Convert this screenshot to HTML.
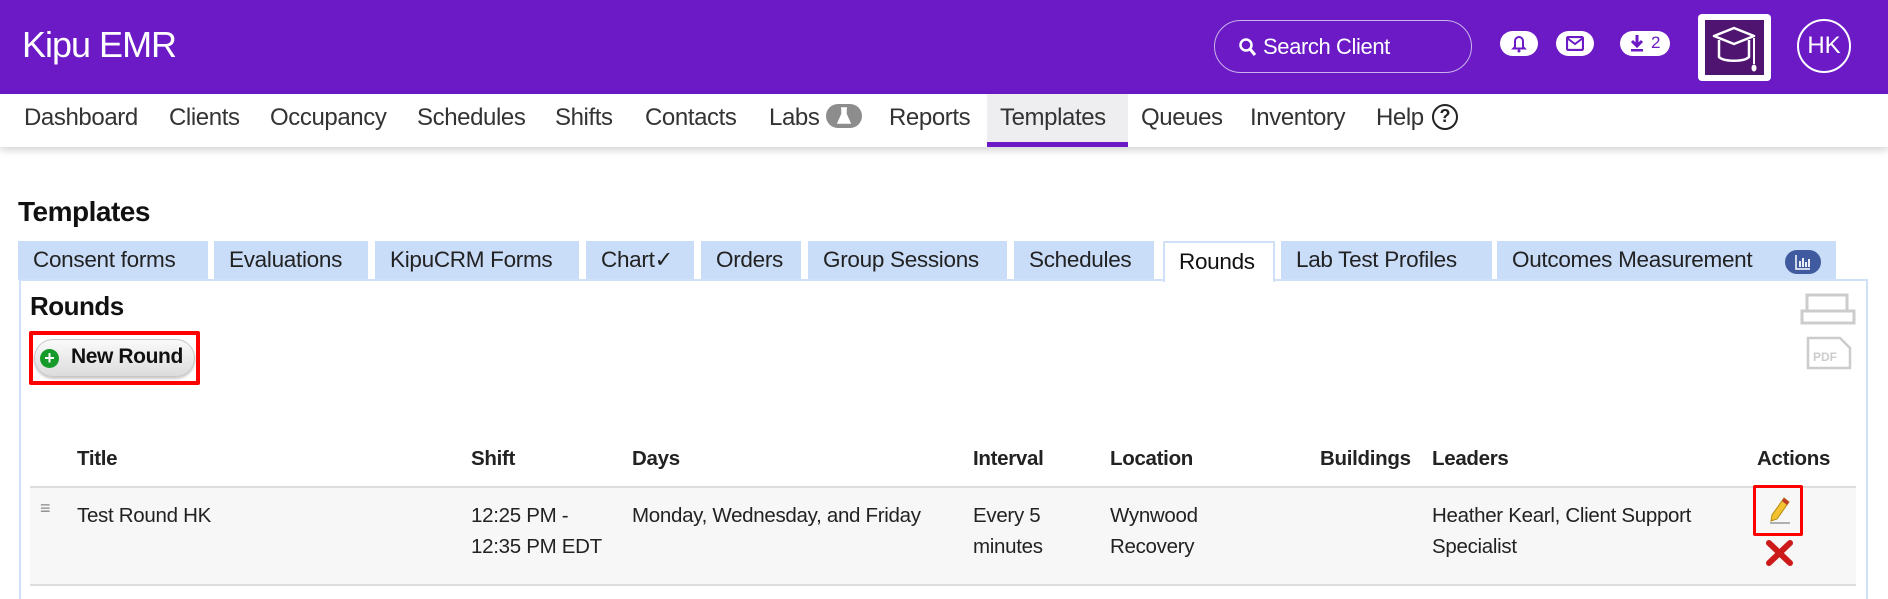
<!DOCTYPE html>
<html><head><meta charset="utf-8"><style>
*{margin:0;padding:0;box-sizing:border-box}
body{width:1888px;height:588px;overflow:hidden;background:#fff;font-family:"Liberation Sans",sans-serif;color:#222;position:relative}
.a{position:absolute;white-space:nowrap}
#hdr{position:absolute;left:0;top:0;width:1888px;height:94px;background:#6b1ac6}
#nav{position:absolute;left:0;top:94px;width:1888px;height:53px;background:#fff;box-shadow:0 3px 8px rgba(0,0,0,.18)}
.nv{position:absolute;top:11px;font-size:24px;color:#333;letter-spacing:-0.4px}
.tab{position:absolute;top:241px;height:39px;background:#c9dcf8;font-size:22.5px;color:#222;padding-top:6px;padding-left:15px;text-align:left;letter-spacing:-0.3px;overflow:hidden}
.th{position:absolute;top:447px;font-size:20.5px;font-weight:bold;color:#222;letter-spacing:-0.3px}
.td{position:absolute;top:500px;font-size:20.5px;line-height:31px;color:#222;letter-spacing:-0.3px}
.pill{position:absolute;top:31px;height:25px;background:#fff;border-radius:13px}
</style></head><body>
<div id="hdr"></div>
<div class="a" style="left:22px;top:24px;font-size:36px;color:#fff;letter-spacing:-1px">Kipu EMR</div>
<div class="a" style="left:1214px;top:20px;width:258px;height:53px;border:1.5px solid #c9b3ea;border-radius:27px"></div>
<svg class="a" style="left:1238px;top:37px" width="20" height="22" viewBox="0 0 20 22"><circle cx="8" cy="8" r="5.5" fill="none" stroke="#fff" stroke-width="2.5"/><line x1="12" y1="12" x2="17" y2="18" stroke="#fff" stroke-width="3"/></svg>
<div class="a" style="left:1263px;top:34px;font-size:22px;color:#fff;letter-spacing:-0.4px">Search Client</div>
<div class="pill" style="left:1500px;width:38px"></div>
<svg class="a" style="left:1511px;top:35px" width="16" height="18" viewBox="0 0 16 18"><path d="M4 12V6a4 4 0 0 1 8 0v6l1.5 1.5h-11z" fill="none" stroke="#6b1ac6" stroke-width="2"/><circle cx="8" cy="16" r="1.5" fill="#6b1ac6"/></svg>
<div class="pill" style="left:1556px;width:38px"></div>
<svg class="a" style="left:1566px;top:36px" width="18" height="15" viewBox="0 0 18 15"><rect x="1" y="1" width="16" height="13" rx="1.5" fill="none" stroke="#6b1ac6" stroke-width="2.2"/><path d="M1 2l8 6 8-6" fill="none" stroke="#6b1ac6" stroke-width="2"/></svg>
<div class="pill" style="left:1620px;width:50px"></div>
<svg class="a" style="left:1630px;top:34px" width="14" height="18" viewBox="0 0 14 18"><path d="M7 1v10M2 7l5 5 5-5" fill="none" stroke="#6b1ac6" stroke-width="3"/><rect x="1" y="15" width="12" height="2.5" fill="#6b1ac6"/></svg>
<div class="a" style="left:1651px;top:33px;font-size:17px;color:#6b1ac6">2</div>
<div class="a" style="left:1698px;top:14px;width:73px;height:67px;background:#fff;border-radius:4px"></div>
<div class="a" style="left:1705px;top:20px;width:59px;height:55px;background:#4e1470"></div>
<svg class="a" style="left:1705px;top:20px" width="59" height="55" viewBox="0 0 59 55"><path d="M9 16l20-8 20 8-20 8z" fill="none" stroke="#fff" stroke-width="2.5" stroke-linejoin="round"/><path d="M14 20v17c5 5 25 5 30 0V20" fill="none" stroke="#fff" stroke-width="2.5"/><line x1="49" y1="18" x2="49" y2="44" stroke="#fff" stroke-width="2"/><ellipse cx="49" cy="48" rx="2.5" ry="3.5" fill="#fff"/></svg>
<div class="a" style="left:1797px;top:19px;width:54px;height:54px;border:2px solid #fff;border-radius:50%;color:#fff;font-size:24px;text-align:center;line-height:50px">HK</div>

<div id="nav"></div>
<div class="a" style="left:987px;top:94px;width:141px;height:53px;background:#eeeef1;border-bottom:5px solid #6b1ac6"></div>
<div class="nv" style="left:24px;top:104px">Dashboard</div>
<div class="nv" style="left:169px;top:104px">Clients</div>
<div class="nv" style="left:270px;top:104px">Occupancy</div>
<div class="nv" style="left:417px;top:104px">Schedules</div>
<div class="nv" style="left:555px;top:104px">Shifts</div>
<div class="nv" style="left:645px;top:104px">Contacts</div>
<div class="nv" style="left:769px;top:104px">Labs</div>
<div class="a" style="left:826px;top:104px;width:36px;height:24px;background:#8d8d8d;border-radius:12px"></div>
<svg class="a" style="left:836px;top:106px" width="16" height="20" viewBox="0 0 16 20"><path d="M5 2h6M6 2v6L2 17h12L10 8V2" fill="#fff" stroke="#fff" stroke-width="1.5"/></svg>
<div class="nv" style="left:889px;top:104px">Reports</div>
<div class="nv" style="left:1000px;top:104px">Templates</div>
<div class="nv" style="left:1141px;top:104px">Queues</div>
<div class="nv" style="left:1250px;top:104px">Inventory</div>
<div class="nv" style="left:1376px;top:104px">Help</div>
<div class="a" style="left:1432px;top:104px;width:26px;height:26px;border:2.5px solid #222;border-radius:50%;font-size:18px;font-weight:bold;text-align:center;line-height:21px;color:#222">?</div>

<div class="a" style="left:18px;top:196px;font-size:28px;font-weight:bold;color:#111;letter-spacing:-0.5px">Templates</div>
<div class="tab" style="left:18px;width:190px">Consent forms</div>
<div class="tab" style="left:214px;width:154px">Evaluations</div>
<div class="tab" style="left:375px;width:204px">KipuCRM Forms</div>
<div class="tab" style="left:586px;width:108px">Chart✓</div>
<div class="tab" style="left:701px;width:100px">Orders</div>
<div class="tab" style="left:808px;width:199px">Group Sessions</div>
<div class="tab" style="left:1014px;width:140px">Schedules</div>
<div class="tab" style="left:1281px;width:211px">Lab Test Profiles</div>
<div class="tab" style="left:1497px;width:339px">Outcomes Measurement</div>
<div class="a" style="left:1785px;top:250px;width:36px;height:24px;background:#3f5a9e;border-radius:12px"></div>
<svg class="a" style="left:1795px;top:254px" width="16" height="16" viewBox="0 0 16 16"><path d="M1 1v14h14" fill="none" stroke="#fff" stroke-width="1.5"/><path d="M5 13V7M8 13V4M11 13V8M14 13V5" stroke="#fff" stroke-width="1.8"/></svg>
<div class="a" style="left:19px;top:279px;width:1849px;height:320px;border:2px solid #cfe0f7;border-bottom:none"></div>
<div class="tab" style="left:1163px;width:112px;background:#fff;border:2px solid #cfe0f7;border-bottom:none;height:41px;color:#111;padding-left:14px">Rounds</div>

<div class="a" style="left:30px;top:291px;font-size:26px;font-weight:bold;color:#111;letter-spacing:-0.5px">Rounds</div>
<svg class="a" style="left:1800px;top:293px" width="56" height="32" viewBox="0 0 56 32"><rect x="7" y="2" width="40" height="16" fill="none" stroke="#ccc" stroke-width="3"/><rect x="2" y="18" width="52" height="12" fill="none" stroke="#ccc" stroke-width="3"/></svg>
<svg class="a" style="left:1806px;top:336px" width="46" height="34" viewBox="0 0 46 34"><path d="M2 2h32l10 10v20H2z" fill="none" stroke="#ccc" stroke-width="2.5"/><text x="7" y="25" font-family="Liberation Sans" font-weight="bold" font-size="12" fill="#ccc">PDF</text></svg>

<div class="a" style="left:29px;top:331px;width:171px;height:54px;border:4px solid #ff0000;border-radius:2px"></div>
<div class="a" style="left:34px;top:339px;width:161px;height:38px;border-radius:19px;background:linear-gradient(#fafafa,#dcdcdc);border:1px solid #c8c8c8;box-shadow:0 2px 2px rgba(0,0,0,.2)"></div>
<div class="a" style="left:40px;top:349px;width:19px;height:19px;border-radius:50%;background:#169a2a;color:#fff;font-weight:bold;font-size:18px;line-height:18px;text-align:center">+</div>
<div class="a" style="left:71px;top:345px;font-size:21px;font-weight:bold;color:#111;letter-spacing:-0.4px">New Round</div>

<div class="th" style="left:77px">Title</div>
<div class="th" style="left:471px">Shift</div>
<div class="th" style="left:632px">Days</div>
<div class="th" style="left:973px">Interval</div>
<div class="th" style="left:1110px">Location</div>
<div class="th" style="left:1320px">Buildings</div>
<div class="th" style="left:1432px">Leaders</div>
<div class="th" style="left:1757px">Actions</div>
<div class="a" style="left:30px;top:486px;width:1826px;height:100px;background:#f7f7f7;border-top:2px solid #ddd;border-bottom:2px solid #ddd"></div>
<div class="a" style="left:40px;top:498px;font-size:18px;color:#888">≡</div>
<div class="td" style="left:77px">Test Round HK</div>
<div class="td" style="left:471px">12:25 PM -<br>12:35 PM EDT</div>
<div class="td" style="left:632px">Monday, Wednesday, and Friday</div>
<div class="td" style="left:973px">Every 5<br>minutes</div>
<div class="td" style="left:1110px">Wynwood<br>Recovery</div>
<div class="td" style="left:1432px">Heather Kearl, Client Support<br>Specialist</div>
<div class="a" style="left:1753px;top:485px;width:50px;height:51px;border:3px solid #ff0000;border-radius:2px"></div>
<svg class="a" style="left:1766px;top:495px" width="26" height="30" viewBox="0 0 26 30"><path d="M18 3l5 4-12 17-6 2 1-6z" fill="#f2c230" stroke="#b58a10" stroke-width="1"/><path d="M18 3l5 4-2 3-5-4z" fill="#c0392b"/><line x1="4" y1="28" x2="24" y2="28" stroke="#999" stroke-width="1.5"/></svg>
<svg class="a" style="left:1766px;top:540px" width="27" height="26" viewBox="0 0 27 26"><path d="M3 3l21 20M24 3L3 23" stroke="#cc1a1a" stroke-width="6" stroke-linecap="round"/></svg>
</body></html>
